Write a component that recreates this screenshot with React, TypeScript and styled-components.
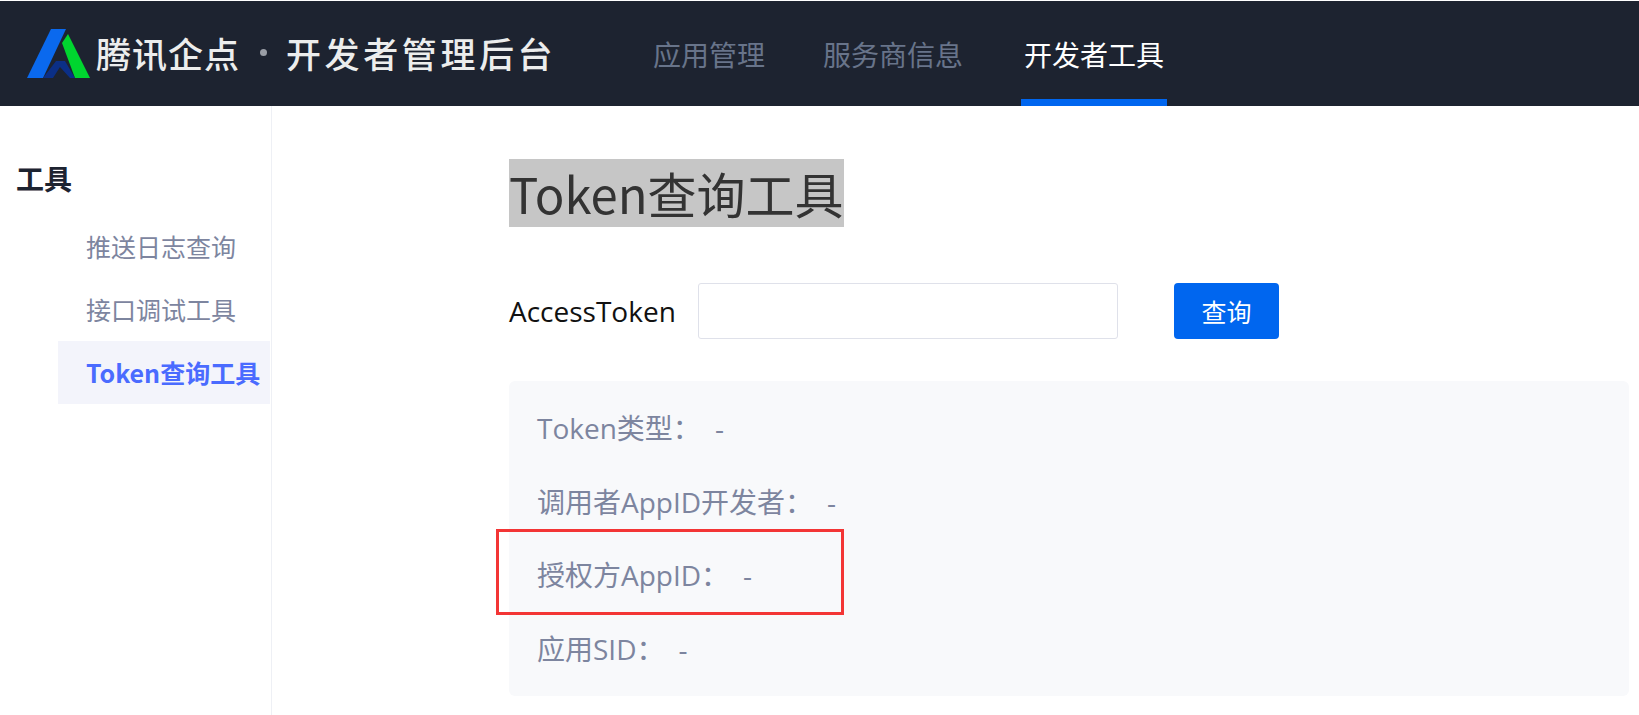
import React from "react";
import styled, { createGlobalStyle } from "styled-components";

const GlobalStyle = createGlobalStyle`
  html, body {
    margin: 0;
    padding: 0;
    height: 100%;
    background: #fff;
    overflow: hidden;
  }
  body {
    font-family: "Noto Sans CJK SC", "Noto Sans", sans-serif;
  }
`;

const latinFirst = `"Open Sans", "Noto Sans CJK SC", sans-serif`;

const Page = styled.div`
  display: flex;
  flex-direction: column;
  height: 715px;
  padding-top: 1px;
  box-sizing: border-box;
`;

const Header = styled.header`
  display: flex;
  align-items: stretch;
  height: 105px;
  padding-left: 27px;
  background: #1d2330;
  flex-shrink: 0;
`;

const Brand = styled.div`
  display: flex;
  align-items: center;
  width: 626px;
  padding-bottom: 2px;
  box-sizing: border-box;
  color: #eceded;
  font-size: 35px;
  font-weight: 500;
  white-space: nowrap;
`;

const BrandText = styled.span<{ $wide?: boolean }>`
  letter-spacing: ${(p) => (p.$wide ? "3.6px" : "1px")};
`;

const BrandDot = styled.span`
  width: 7px;
  height: 7px;
  margin: 0 19px 0 20px;
  border-radius: 50%;
  background: #9a9ea6;
`;

const NavItem = styled.a<{ $active?: boolean }>`
  display: flex;
  align-items: center;
  padding: 8px ${(p) => (p.$active ? "3px" : "0")} 0;
  margin-right: ${(p) => (p.$active ? "0" : "58px")};
  box-sizing: border-box;
  font-size: 28px;
  color: ${(p) => (p.$active ? "#fff" : "#68748a")};
  border-bottom: 7px solid ${(p) => (p.$active ? "#0066ef" : "transparent")};
`;

const Body = styled.div`
  display: flex;
  flex: 1;
  min-height: 0;
`;

const Sidebar = styled.aside`
  width: 272px;
  padding-top: 50px;
  box-sizing: border-box;
  border-right: 1px solid #eef0f5;
  flex-shrink: 0;
`;

const SideTitle = styled.div`
  height: 44px;
  margin-bottom: 15px;
  padding-left: 16px;
  font-size: 28px;
  font-weight: 700;
  line-height: 44px;
  color: #1d2330;
`;

const SideItem = styled.div<{ $active?: boolean }>`
  height: 63px;
  margin-left: 58px;
  margin-right: 1px;
  padding-left: 28px;
  font-size: 25px;
  line-height: 63px;
  white-space: nowrap;
  color: ${(p) => (p.$active ? "#4a6bff" : "#7d859f")};
  font-weight: ${(p) => (p.$active ? 700 : 400)};
  background: ${(p) => (p.$active ? "#f3f4fb" : "transparent")};
`;

const Main = styled.main`
  flex: 1;
  padding: 53px 10px 0 237px;
  min-width: 0;
`;

const Title = styled.h1`
  display: inline-block;
  margin: 0;
  height: 68px;
  font-size: 49px;
  font-weight: 400;
  line-height: 68px;
  color: #333;
  background: #c6c6c6;
  white-space: nowrap;
`;

const QueryRow = styled.div`
  display: flex;
  align-items: center;
  margin-top: 56px;
`;

const QueryLabel = styled.label`
  width: 189px;
  font-family: ${latinFirst};
  font-size: 28px;
  line-height: 56px;
  color: #111;
`;

const TokenInput = styled.input`
  width: 420px;
  height: 56px;
  box-sizing: border-box;
  border: 1px solid #dfe1ea;
  border-radius: 3px;
  background: #fff;
  outline: none;
`;

const QueryButton = styled.button`
  width: 105px;
  height: 56px;
  margin-left: 56px;
  border: none;
  border-radius: 4px;
  background: #0066ef;
  color: #fff;
  font-family: inherit;
  font-size: 25px;
  padding: 0;
`;

const ResultPanel = styled.section`
  position: relative;
  height: 315px;
  margin-top: 42px;
  padding: 11px 0 0 28px;
  box-sizing: border-box;
  background: #f8f9fb;
  border-radius: 6px;
`;

const ResultRow = styled.div`
  height: 73.5px;
  font-family: ${latinFirst};
  font-size: 28px;
  line-height: 73.5px;
  color: #7d859f;
  white-space: nowrap;
`;

const ResultValue = styled.span`
  margin-left: 14px;
`;

const Highlight = styled.div`
  position: absolute;
  left: -13px;
  top: 148px;
  width: 348px;
  height: 86px;
  box-sizing: border-box;
  border: 3px solid #f33535;
  pointer-events: none;
`;

const Logo = () => (
  <svg width="66" height="50" viewBox="0 0 66 50" style={{ flexShrink: 0, marginRight: 3, marginTop: 2 }}>
    <path d="M0 49 L24 0 L39 0 L16 49 Z" fill="#0a69ee" />
    <path d="M35 14 L41 5 L63 49 L48 49 Z" fill="#00d52f" />
    <path d="M16 49 L29 32 L38 32 L48 49 L43 49 L33 38 L26 49 Z" fill="#0b2f86" />
  </svg>
);

const results = [
  { label: "Token类型：" },
  { label: "调用者AppID开发者：" },
  { label: "授权方AppID：" },
  { label: "应用SID：" },
];

const App: React.FC = () => {
  return (
    <Page>
      <GlobalStyle />
      <Header>
        <Brand>
          <Logo />
          <BrandText>腾讯企点</BrandText>
          <BrandDot />
          <BrandText $wide>开发者管理后台</BrandText>
        </Brand>
        <NavItem>应用管理</NavItem>
        <NavItem>服务商信息</NavItem>
        <NavItem $active>开发者工具</NavItem>
      </Header>
      <Body>
        <Sidebar>
          <SideTitle>工具</SideTitle>
          <SideItem>推送日志查询</SideItem>
          <SideItem>接口调试工具</SideItem>
          <SideItem $active>Token查询工具</SideItem>
        </Sidebar>
        <Main>
          <Title>Token查询工具</Title>
          <QueryRow>
            <QueryLabel>AccessToken</QueryLabel>
            <TokenInput />
            <QueryButton>查询</QueryButton>
          </QueryRow>
          <ResultPanel>
            {results.map((r) => (
              <ResultRow key={r.label}>
                {r.label}
                <ResultValue>-</ResultValue>
              </ResultRow>
            ))}
            <Highlight />
          </ResultPanel>
        </Main>
      </Body>
    </Page>
  );
};

export default App;
